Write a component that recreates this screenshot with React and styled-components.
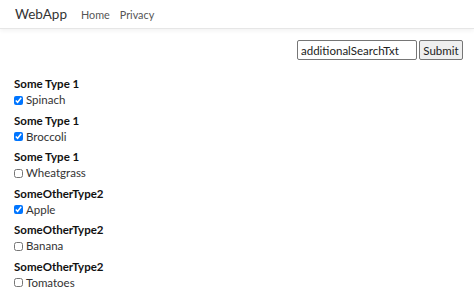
import React, { useState } from 'react'
import styled, { createGlobalStyle } from 'styled-components'

const GlobalStyle = createGlobalStyle`
  body {
    margin: 0;
    background: #fff;
    font-family: Lato, "Noto Sans", sans-serif;
    color: #212529;
  }
`

const NavBar = styled.nav`
  display: flex;
  align-items: center;
  height: 28px;
  padding: 0 14px 0 15px;
  background: #fff;
  border-bottom: 1px solid #e6e6e6;
  box-shadow: 0 2px 4px rgba(0, 0, 0, 0.05);
`

const Brand = styled.a`
  font-size: 13.5px;
  color: #333;
  margin-right: 9px;
  text-decoration: none;
`

const NavLink = styled.a`
  font-size: 10.8px;
  color: #555;
  padding: 0 5px;
  text-decoration: none;
`

const Main = styled.main`
  padding: 11px 11px 0 14px;
`

const SearchRow = styled.form`
  display: flex;
  justify-content: flex-end;
  gap: 2px;
  margin-bottom: 16px;
`

const SearchInput = styled.input`
  width: 120px;
  height: 20px;
  box-sizing: border-box;
  border: 1px solid #767676;
  border-radius: 2px;
  padding: 0 3px;
  font-family: inherit;
  font-size: 11.5px;
  color: #222;
`

const SubmitButton = styled.button`
  width: 44px;
  height: 20px;
  box-sizing: border-box;
  padding: 0;
  border: 1px solid #767676;
  border-radius: 2px;
  background: #efefef;
  font-family: inherit;
  font-size: 11.5px;
  color: #222;
`

const Group = styled.div`
  margin-bottom: 4.6px;
`

const GroupTitle = styled.div`
  font-size: 11.5px;
  font-weight: 700;
  color: #111;
  line-height: 16px;
`

const ItemLabel = styled.label`
  display: flex;
  align-items: center;
  gap: 3px;
  font-size: 11.5px;
  line-height: 16px;
  color: #333;
`

const Box = styled.input`
  width: 9px;
  height: 9px;
  margin: 0;
`

const initial = [
  { type: 'Some Type 1', name: 'Spinach', checked: true },
  { type: 'Some Type 1', name: 'Broccoli', checked: true },
  { type: 'Some Type 1', name: 'Wheatgrass', checked: false },
  { type: 'SomeOtherType2', name: 'Apple', checked: true },
  { type: 'SomeOtherType2', name: 'Banana', checked: false },
  { type: 'SomeOtherType2', name: 'Tomatoes', checked: false },
]

const App = () => {
  const [items, setItems] = useState(initial)

  const toggle = (i) =>
    setItems(items.map((it, j) => (j === i ? { ...it, checked: !it.checked } : it)))

  return (
    <>
      <GlobalStyle />
      <NavBar>
        <Brand href="#">WebApp</Brand>
        <NavLink href="#">Home</NavLink>
        <NavLink href="#">Privacy</NavLink>
      </NavBar>
      <Main>
        <SearchRow onSubmit={(e) => e.preventDefault()}>
          <SearchInput defaultValue="additionalSearchTxt" />
          <SubmitButton type="submit">Submit</SubmitButton>
        </SearchRow>
        {items.map((it, i) => (
          <Group key={it.name}>
            <GroupTitle>{it.type}</GroupTitle>
            <ItemLabel>
              <Box type="checkbox" checked={it.checked} onChange={() => toggle(i)} />
              {it.name}
            </ItemLabel>
          </Group>
        ))}
      </Main>
    </>
  )
}

export default App
